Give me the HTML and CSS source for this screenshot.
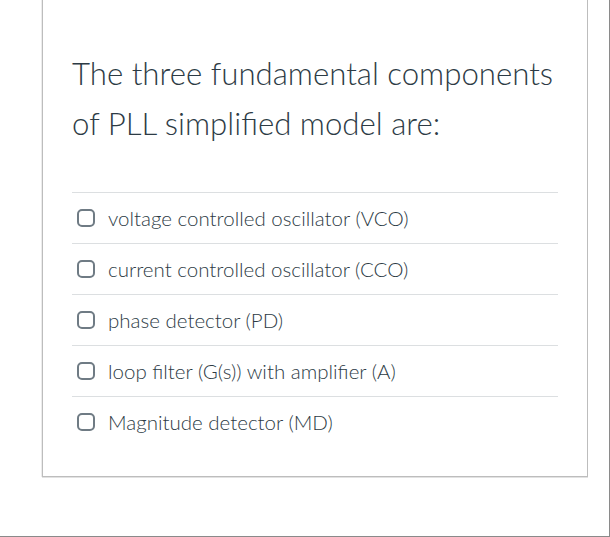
FILE: index.html
```html
<!DOCTYPE html>
<html>
<head>
<meta charset="utf-8">
<link rel="stylesheet" href="styles.css">
</head>
<body>
<div class="frame">
  <div class="card">
    <div class="question">The three fundamental components of PLL simplified model are:</div>
    <div class="answers">
      <label class="answer"><span class="box"></span><span class="text">voltage controlled oscillator (VCO)</span></label>
      <label class="answer"><span class="box"></span><span class="text">current controlled oscillator (CCO)</span></label>
      <label class="answer"><span class="box"></span><span class="text">phase detector (PD)</span></label>
      <label class="answer"><span class="box"></span><span class="text">loop filter (G(s)) with amplifier (A)</span></label>
      <label class="answer"><span class="box"></span><span class="text">Magnitude detector (MD)</span></label>
    </div>
  </div>
</div>
</body>
</html>
```
FILE: styles.css
```css
html, body {
  margin: 0;
  padding: 0;
  background: #fff;
}
.frame {
  width: 610px;
  height: 537px;
  box-sizing: border-box;
  padding-left: 42px;
  border-right: 1px solid #8a8a8a;
  border-bottom: 1px solid #8a8a8a;
  overflow: hidden;
}
.card {
  width: 546px;
  box-sizing: border-box;
  border: 1px solid #bdbdbd;
  border-top: none;
  box-shadow: 0 1px 0 0 #e2e2e2, -1px 0 0 0 #ececec;
  padding: 48px 29px 29px;
  font-family: Lato, "Open Sans", sans-serif;
  font-weight: 300;
  color: #2d3b45;
}
.question {
  font-size: 31.2px;
  line-height: 50px;
  margin-bottom: 44px;
}
.answer {
  display: flex;
  align-items: center;
  gap: 13px;
  height: 50px;
  padding-left: 5px;
  border-top: 1px solid #dcdfe1;
  font-size: 20.5px;
}
.box {
  width: 18px;
  height: 18px;
  box-sizing: border-box;
  border: 2px solid #6f7b84;
  border-radius: 5px;
  flex: none;
}
```
